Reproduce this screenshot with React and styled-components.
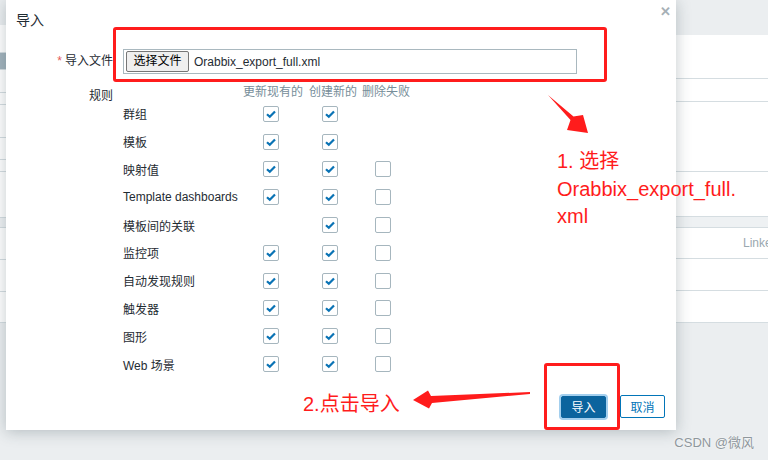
import React from 'react';
import styled, { createGlobalStyle } from 'styled-components';

const GlobalStyle = createGlobalStyle`
  html, body {
    margin: 0;
    padding: 0;
    background: #ebeef0;
    overflow: hidden;
  }
  body {
    font-family: "Liberation Sans", "Noto Sans CJK SC", sans-serif;
    color: #1f2c33;
  }
`;

const Page = styled.div`
  position: relative;
  width: 768px;
  height: 460px;
  overflow: hidden;
  background: #ebeef0;
`;

/* ---------- background page (mostly hidden by the dialog) ---------- */

const Backdrop = styled.div`
  display: flex;
  align-items: flex-start;
  width: 100%;
`;

const Pane = styled.div`
  display: flex;
  flex-direction: column;
  margin-top: ${p => p.$top}px;
  width: ${p => (p.$width ? `${p.$width}px` : 'auto')};
  flex: ${p => (p.$width ? 'none' : 1)};
  min-width: 0;
  background: #ffffff;
`;

const PaneRow = styled.div`
  height: ${p => p.$h}px;
  box-sizing: border-box;
  border-bottom: 1px solid #d5dde1;
  background: ${p => p.$bg || 'transparent'};
  display: flex;
  align-items: center;
  padding-left: 443px;
  font-size: 12px;
  color: #9aa8b0;
  white-space: nowrap;
  overflow: hidden;
`;

const leftRows = [
  { h: 28 }, { h: 17, bg: '#a3b4bd' }, { h: 23 }, { h: 12 }, { h: 33 }, { h: 22 },
  { h: 12 }, { h: 46 }, { h: 10, bg: '#eef1f3' }, { h: 32 }, { h: 32 }, { h: 31 },
];

const rightRows = [
  { h: 44 }, { h: 23 }, { h: 70 }, { h: 45 }, { h: 11, bg: '#eef1f3' },
  { h: 31, text: 'Linked templates' }, { h: 32 }, { h: 32 },
];

/* ---------- dialog ---------- */

const Dialog = styled.div`
  position: absolute;
  left: 6px;
  top: 0;
  width: 670px;
  height: 430px;
  background: #ffffff;
  box-shadow: 0 2px 14px rgba(40, 60, 70, 0.28);
  display: flex;
  flex-direction: column;
`;

const Header = styled.div`
  display: flex;
  justify-content: space-between;
  padding: 0 5px 0 10px;
  height: 40px;
`;

const Title = styled.h4`
  margin: 0;
  font-size: 14px;
  font-weight: normal;
  line-height: 20px;
  padding-top: 10px;
  color: #1f2c33;
`;

const Close = styled.span`
  font-size: 13px;
  font-weight: bold;
  color: #a6b0b6;
  line-height: 14px;
  padding-top: 5px;
`;

const Form = styled.div`
  display: grid;
  grid-template-columns: 107px 1fr;
  column-gap: 10px;
  row-gap: 10px;
  padding-top: 9px;
`;

const Label = styled.div`
  text-align: right;
  font-size: 12px;
  line-height: ${p => p.$lh || 25}px;
  padding-top: ${p => p.$pt || 0}px;
  color: #1f2c33;
`;

const Req = styled.span`
  color: #e45959;
  margin-right: 3px;
`;

const FileBox = styled.div`
  width: 454px;
  height: 25px;
  box-sizing: border-box;
  border: 1px solid #a9b8bf;
  display: flex;
  align-items: center;
  padding: 0 2px;
`;

const FileButton = styled.span`
  height: 21px;
  width: 63px;
  box-sizing: border-box;
  border: 1px solid #767676;
  border-radius: 2px;
  background: #efefef;
  font-size: 12px;
  line-height: 19px;
  text-align: center;
  color: #000;
`;

const FileName = styled.span`
  margin-left: 5px;
  font-size: 12px;
  color: #1f2c33;
`;

const Rules = styled.div`
  display: grid;
  grid-template-columns: 120px 66px 53px 53px;
  grid-auto-rows: 27.8px;
  grid-template-rows: 16px;
`;

const ColHead = styled.div`
  font-size: 12px;
  line-height: 16px;
  color: #768d99;
  white-space: nowrap;
`;

const RowLabel = styled.div`
  font-size: 12px;
  display: flex;
  align-items: center;
  color: #1f2c33;
  white-space: nowrap;
`;

const CheckCell = styled.div`
  display: flex;
  align-items: center;
  padding-left: ${p => p.$pad}px;
`;

const Box = styled.span`
  width: 16px;
  height: 16px;
  box-sizing: border-box;
  border: 1px solid #a6b6be;
  border-radius: 2px;
  background: #fff;
  display: flex;
  align-items: center;
  justify-content: center;
`;

const Footer = styled.div`
  margin-top: auto;
  display: flex;
  justify-content: flex-end;
  align-items: center;
  padding: 0 11px 12px 0;
`;

const Button = styled.button`
  height: ${p => (p.$primary ? 22 : 23)}px;
  width: 45px;
  box-sizing: border-box;
  font-family: inherit;
  font-size: 12px;
  padding: 0;
  border-radius: 2px;
  border: 1px solid ${p => (p.$primary ? '#0b649e' : '#0275b8')};
  background: ${p => (p.$primary ? '#0b649e' : '#ffffff')};
  color: ${p => (p.$primary ? '#ffffff' : '#0275b8')};
  box-shadow: ${p => (p.$primary ? '0 0 0 2px #a3cfee' : 'none')};
  margin-right: ${p => p.$mr || 0}px;
`;

/* ---------- annotations (overlays) ---------- */

const Frame = styled.div`
  position: absolute;
  left: ${p => p.$x}px;
  top: ${p => p.$y}px;
  width: ${p => p.$w}px;
  height: ${p => p.$h}px;
  box-sizing: border-box;
  border: 3px solid #ff1c1c;
  border-radius: 3px;
  pointer-events: none;
`;

const Note = styled.div`
  position: absolute;
  left: ${p => p.$x}px;
  top: ${p => p.$y}px;
  color: #ff1c1c;
  font-size: 20px;
  line-height: 27.5px;
  white-space: nowrap;
`;

const Overlay = styled.svg`
  position: absolute;
  left: 0;
  top: 0;
  pointer-events: none;
`;

const Watermark = styled.div`
  position: absolute;
  right: 14px;
  bottom: 9px;
  font-size: 13px;
  color: #8f979c;
  text-shadow: 0 0 2px #fff;
`;

const rules = [
  { name: '群组', c: [true, true, null] },
  { name: '模板', c: [true, true, null] },
  { name: '映射值', c: [true, true, false] },
  { name: 'Template dashboards', c: [true, true, false] },
  { name: '模板间的关联', c: [null, true, false] },
  { name: '监控项', c: [true, true, false] },
  { name: '自动发现规则', c: [true, true, false] },
  { name: '触发器', c: [true, true, false] },
  { name: '图形', c: [true, true, false] },
  { name: 'Web 场景', c: [true, true, false] },
];

const pads = [20, 13, 13];

const Check = ({ on }) => (
  <Box>
    {on && (
      <svg width="12" height="12" viewBox="0 0 12 12">
        <path d="M2 6.2 L4.8 8.8 L10 3.4" fill="none" stroke="#0a73b5" strokeWidth="2.2" strokeLinejoin="miter" />
      </svg>
    )}
  </Box>
);

const App = () => (
  <Page>
    <GlobalStyle />
    <Backdrop>
      <Pane $top={25} $width={300}>
        {leftRows.map((r, i) => (
          <PaneRow key={i} $h={r.h} $bg={r.bg} />
        ))}
      </Pane>
      <Pane $top={35}>
        {rightRows.map((r, i) => (
          <PaneRow key={i} $h={r.h} $bg={r.bg}>
            {r.text}
          </PaneRow>
        ))}
      </Pane>
    </Backdrop>

    <Dialog>
      <Header>
        <Title>导入</Title>
        <Close>✕</Close>
      </Header>
      <Form>
        <Label>
          <Req>*</Req>导入文件
        </Label>
        <FileBox>
          <FileButton>选择文件</FileButton>
          <FileName>Orabbix_export_full.xml</FileName>
        </FileBox>
        <Label $lh={16} $pt={4}>规则</Label>
        <Rules>
          <div />
          <ColHead>更新现有的</ColHead>
          <ColHead>创建新的</ColHead>
          <ColHead>删除失败</ColHead>
          {rules.map(r => (
            <React.Fragment key={r.name}>
              <RowLabel>{r.name}</RowLabel>
              {r.c.map((v, i) => (
                <CheckCell key={i} $pad={pads[i]}>
                  {v !== null && <Check on={v} />}
                </CheckCell>
              ))}
            </React.Fragment>
          ))}
        </Rules>
      </Form>
      <Footer>
        <Button $primary $mr={14}>导入</Button>
        <Button>取消</Button>
      </Footer>
    </Dialog>

    <Frame $x={113} $y={27} $w={494} $h={55} />
    <Frame $x={544} $y={363} $w={76} $h={67} />

    <Overlay width="768" height="460" viewBox="0 0 768 460">
      <polygon points="548,95 573.5,116.5 583,115 588,133 567,130 570.5,120" fill="#ff1c1c" />
      <polygon points="413,400 428,390.5 431,396 530,392 530,394 432,403 429,408.5" fill="#ff1c1c" />
    </Overlay>

    <Note $x={557} $y={148}>
      1. 选择
      <br />
      Orabbix_export_full.
      <br />
      xml
    </Note>
    <Note $x={303} $y={391}>2.点击导入</Note>

    <Watermark>CSDN @微风</Watermark>
  </Page>
);

export default App;
